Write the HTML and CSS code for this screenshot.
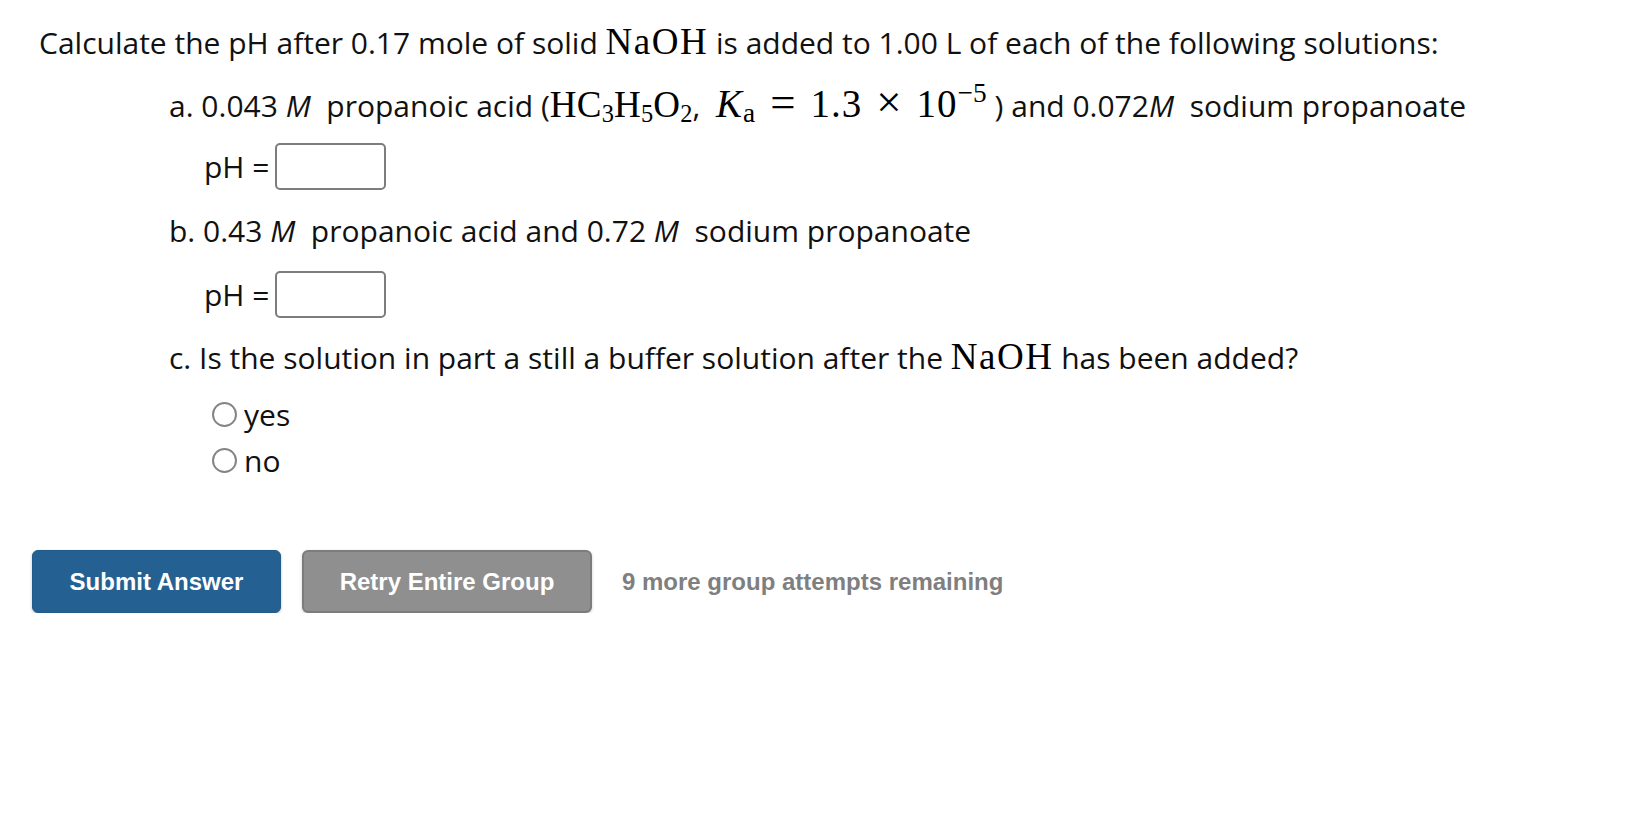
FILE: index.html
```html
<!DOCTYPE html>
<html>
<head>
<meta charset="utf-8">
<link rel="stylesheet" href="styles.css">
</head>
<body>
<div class="question">
  <p class="line title">Calculate the pH after 0.17 mole of solid <span class="m">NaOH</span> is added to 1.00 L of each of the following solutions:</p>
  <div class="parts">
    <p class="line part-a">a. 0.043 <i>M</i>&nbsp; propanoic acid (<span class="m chem">HC<sub>3</sub>H<sub>5</sub>O<sub>2</sub></span>, <span class="m ka"><i>K</i><sub>a</sub><span class="op">=</span>1.3<span class="op">×</span>10<sup>−5</sup></span>) and 0.072<i>M</i>&nbsp; sodium propanoate</p>
    <div class="answer answer-a"><span class="label">pH =</span><span class="box"></span></div>
    <p class="line part-b">b. 0.43 <i>M</i>&nbsp; propanoic acid and 0.72 <i>M</i>&nbsp; sodium propanoate</p>
    <div class="answer answer-b"><span class="label">pH =</span><span class="box"></span></div>
    <p class="line part-c">c. Is the solution in part a still a buffer solution after the <span class="m">NaOH</span> has been added?</p>
    <div class="choices">
      <div class="choice choice-yes"><span class="radio"></span><span>yes</span></div>
      <div class="choice choice-no"><span class="radio"></span><span>no</span></div>
    </div>
  </div>
  <div class="actions">
    <button class="btn btn-submit">Submit Answer</button>
    <button class="btn btn-retry">Retry Entire Group</button>
    <span class="remaining">9 more group attempts remaining</span>
  </div>
</div>
</body>
</html>
```
FILE: styles.css
```css
html, body {
  margin: 0;
  padding: 0;
  background: #ffffff;
}
body {
  font-family: "Open Sans", "Noto Sans", sans-serif;
  font-size: 30px;
  color: #111111;
}
.question {
  padding: 22px 0 0 39px;
}
.line {
  margin: 0;
  height: 40px;
  line-height: 40px;
  white-space: nowrap;
}
.line i {
  font-style: italic;
}
.m {
  font-family: "Liberation Serif", "DejaVu Serif", serif;
  font-size: 37px;
  letter-spacing: 1.5px;
  color: #000;
}
.m i {
  font-style: italic;
}
.m sub, .m sup {
  font-size: 0.7em;
  line-height: 0;
  letter-spacing: 0;
}
.m sub {
  vertical-align: -0.2em;
  margin-right: 1px;
}
.m sup {
  vertical-align: 0.55em;
}
.chem {
  letter-spacing: 0.3px;
}
.chem sub {
  font-size: 0.66em;
  margin-right: 0;
}
.ka {
  font-size: 39px;
  letter-spacing: 1px;
  margin-left: 8px;
}
.ka sup {
  margin-right: 8px;
}
.op {
  padding: 0 14px;
  font-size: 1.15em;
  line-height: 0;
}
.parts {
  padding-left: 130px;
}
.part-a {
  margin-top: 22px;
}
.answer {
  display: flex;
  align-items: center;
  height: 47px;
  padding-left: 35px;
}
.answer-a {
  margin-top: 19px;
}
.answer-b {
  margin-top: 20px;
}
.label {
  width: 71px;
}
.box {
  width: 107px;
  height: 43px;
  border: 2px solid #7d7d7d;
  border-radius: 5px;
  background: #fff;
}
.part-b {
  margin-top: 21px;
}
.part-c {
  margin-top: 19px;
}
.choices {
  padding-left: 43px;
  margin-top: 17px;
  display: flex;
  flex-direction: column;
  gap: 6px;
}
.choice {
  display: flex;
  align-items: center;
  height: 40px;
  gap: 7px;
}
.radio {
  width: 21px;
  height: 21px;
  border: 2px solid #858585;
  border-radius: 50%;
  background: #fff;
}
.actions {
  display: flex;
  align-items: center;
  margin-left: -7px;
  margin-top: 70px;
}
.btn {
  font-family: "Liberation Sans", Arial, sans-serif;
  font-weight: bold;
  font-size: 24px;
  color: #fff;
  height: 63px;
  padding: 0;
  border-radius: 6px;
  white-space: nowrap;
  cursor: pointer;
}
.btn-submit {
  width: 249px;
  background: #256093;
  border: 1px solid #225a8a;
  box-shadow: 0 1px 3px rgba(0,0,0,0.25);
}
.btn-retry {
  width: 290px;
  margin-left: 21px;
  background: #8f8f8f;
  border: 2px solid #7c7c7c;
  box-shadow: 0 1px 3px rgba(0,0,0,0.2);
}
.remaining {
  margin-left: 30px;
  font-family: "Liberation Sans", Arial, sans-serif;
  font-weight: bold;
  font-size: 24px;
  color: #7f7f7f;
}
```
